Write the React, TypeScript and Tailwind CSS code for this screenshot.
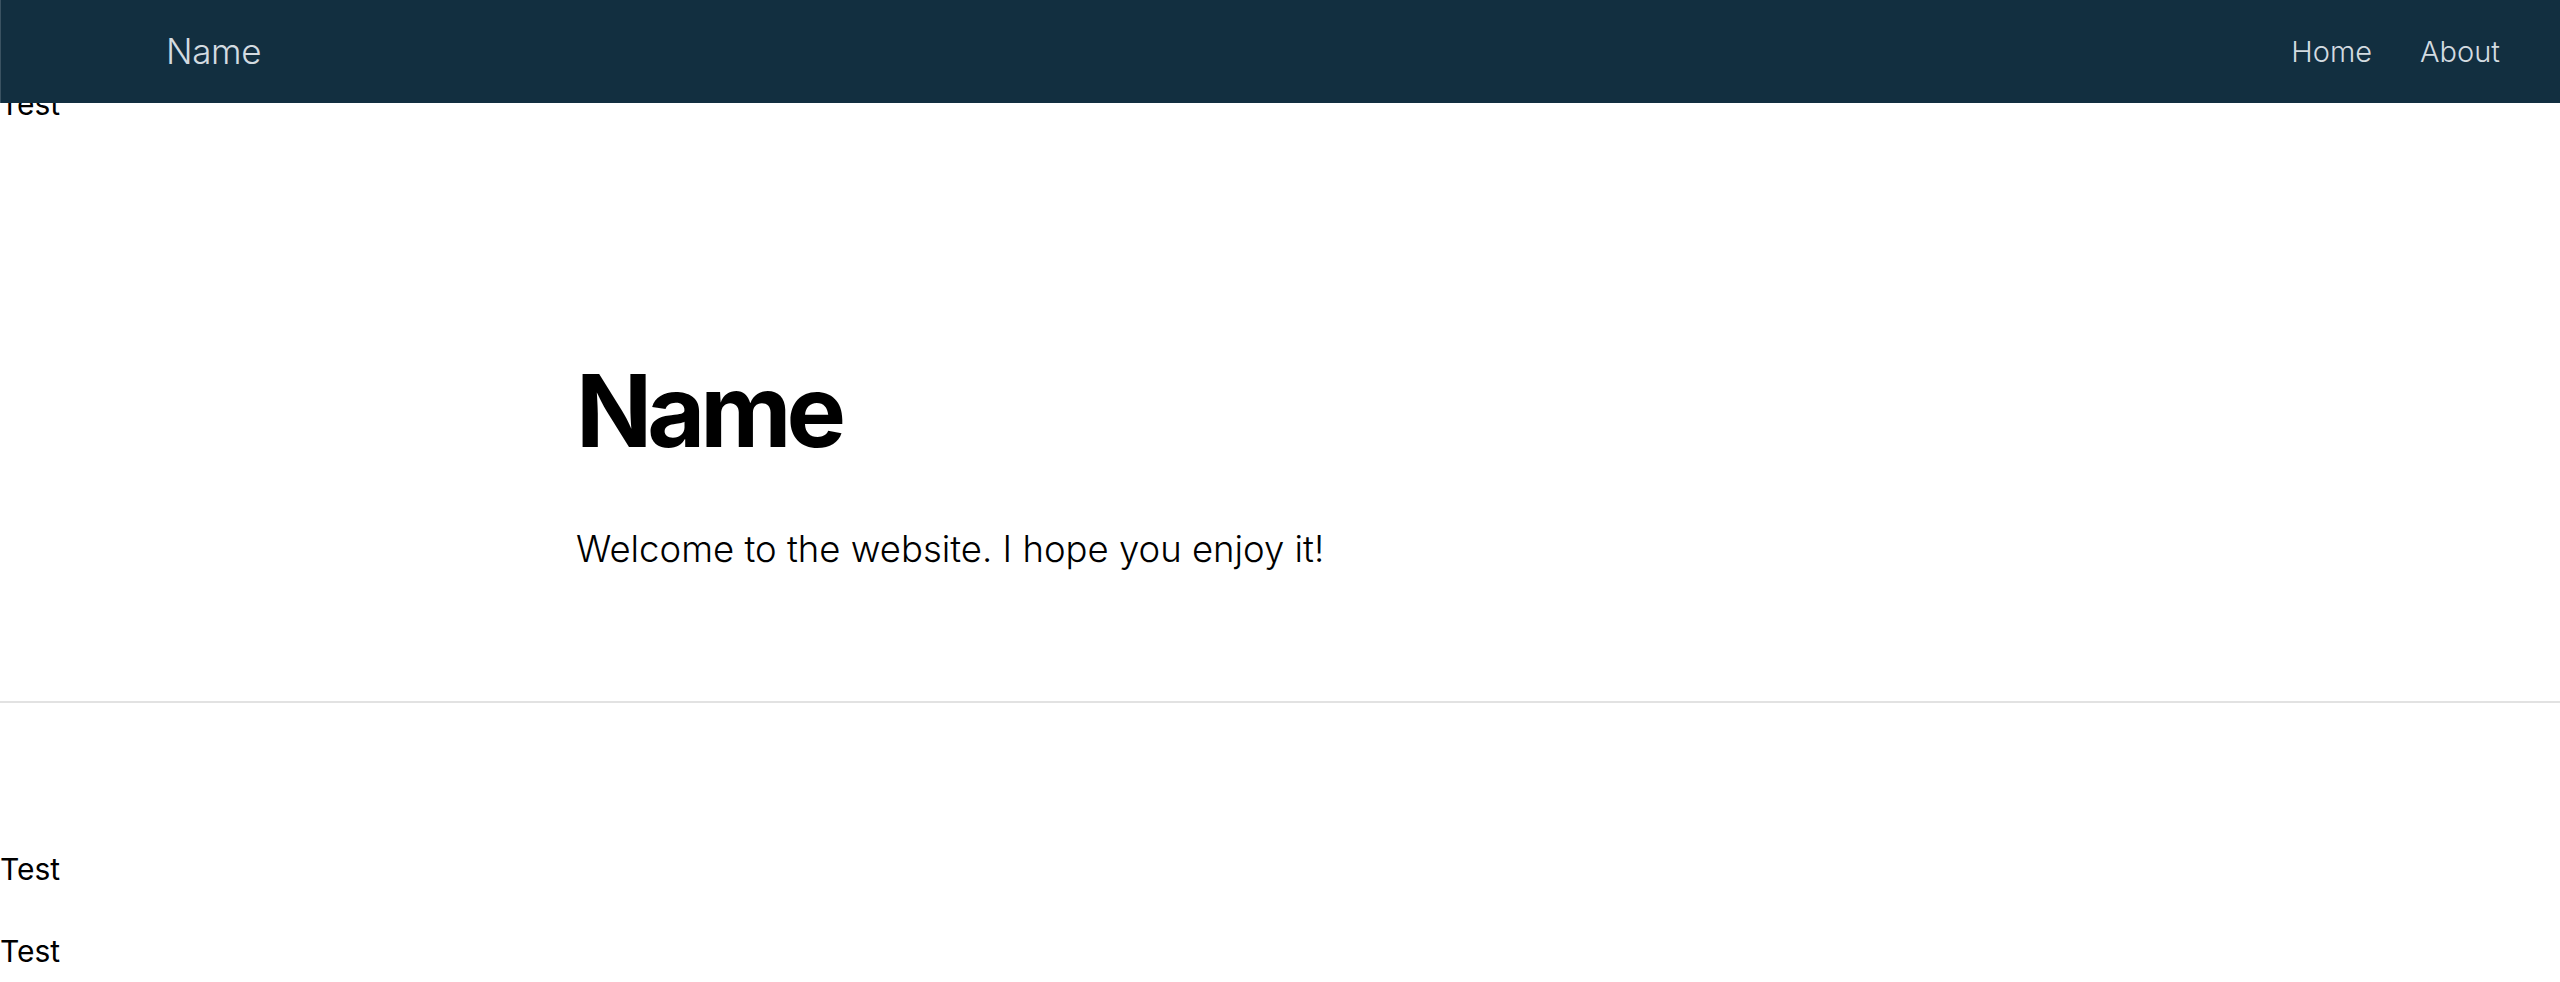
export default function App() {
  return (
    <div className="relative min-h-[982px] bg-white text-black" style={{ fontFamily: 'Inter, "Noto Sans", sans-serif' }}>
      <header className="fixed top-0 left-0 z-20 flex h-[103px] w-full items-center justify-between border-l border-[#3a5261] bg-[#122f40] pl-[165px] pr-[60px]">
        <a className="text-[35px] font-light tracking-[-0.01em] text-[#d3dbe0]">Name</a>
        <nav className="flex items-center gap-[48px] text-[29px] font-light text-[#d3dbe0]">
          <a>Home</a>
          <a>About</a>
        </nav>
      </header>

      <p className="pt-[82px] text-[30px] leading-[45px]">Test</p>

      <section className="border-b-2 border-[#e2e2e2] pl-[576px] pt-[234px] pb-[125px]">
        <h1 className="text-[100px] font-bold leading-none tracking-[-0.05em]">Name</h1>
        <p className="mt-[61px] text-[36.5px] font-light leading-[54px]">Welcome to the website. I hope you enjoy it!</p>
      </section>

      <div className="pt-[144px]">
        <p className="text-[30px] leading-[45px]">Test</p>
        <p className="mt-[37px] text-[30px] leading-[45px]">Test</p>
      </div>
    </div>
  );
}
